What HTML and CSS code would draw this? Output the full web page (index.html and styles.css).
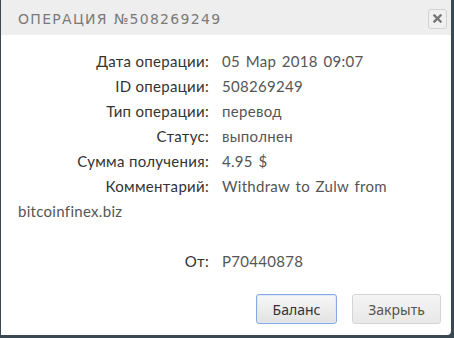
FILE: index.html
```html
<!DOCTYPE html>
<html>
<head>
  <meta charset="utf-8"/>
  <title>Операция</title>
  <link rel="stylesheet" href="styles.css">
</head>
<body>

  <!-- ---------- DIALOG ---------- -->
  <div class="dialog">
    <div class="dialog-header">
      <span class="dialog-title">Операция №508269249</span>
      <button type="button" class="btn-close" title="Закрыть">
        <svg width="9" height="9" viewBox="0 0 9 9">
          <path d="M1.5 1.5 L7.5 7.5 M7.5 1.5 L1.5 7.5" stroke="#777" stroke-width="2.4" stroke-linecap="square"/>
        </svg>
      </button>
    </div>

    <div class="dialog-body">
      <div class="row"><span class="label">Дата операции:</span><span class="value">05 Мар 2018 09:07</span></div>
      <div class="row"><span class="label">ID операции:</span><span class="value">508269249</span></div>
      <div class="row"><span class="label">Тип операции:</span><span class="value">перевод</span></div>
      <div class="row"><span class="label">Статус:</span><span class="value">выполнен</span></div>
      <div class="row"><span class="label">Сумма получения:</span><span class="value">4.95 $</span></div>
      <div class="row"><span class="label">Комментарий:</span><span class="value">Withdraw to Zulw from bitcoinfinex.biz</span></div>
      <div class="row empty"></div>
      <div class="row"><span class="label">От:</span><span class="value">P70440878</span></div>
    </div>

    <div class="dialog-footer">
      <button type="button" class="btn btn-focus">Баланс</button>
      <button type="button" class="btn btn-light">Закрыть</button>
    </div>
  </div>

</body>
</html>
```

FILE: styles.css
```css
/* Basic reset */
* {
  box-sizing: border-box;
  margin: 0;
  padding: 0;
}
body {
  background: #3a4851;
  width: 454px;
  height: 338px;
  overflow: hidden;
}

/* ---------- DIALOG ---------- */
.dialog {
  margin-left: 1px;
  width: 450px;
  height: 335px;
  background: #fff;
  border-radius: 0 0 4px 0;
  display: flex;
  flex-direction: column;
  overflow: hidden;
}
.dialog-header {
  height: 35px;
  background: #eeeeee;
  display: flex;
  align-items: center;
  justify-content: space-between;
  padding: 0 4px 0 17px;
}
.dialog-title {
  font-family: "DejaVu Sans", sans-serif;
  font-size: 14px;
  letter-spacing: 1.3px;
  text-transform: uppercase;
  color: #7a7a7a;
  margin-top: 2px;
}
.btn-close {
  width: 19px;
  height: 20px;
  border: 1px solid #d2d2d2;
  border-radius: 3px;
  background: #f0f0f0;
  display: flex;
  align-items: center;
  justify-content: center;
  margin-top: 2px;
}

/* ---------- BODY ---------- */
.dialog-body {
  flex: 1;
  padding: 14px 17px 0 17px;
  font-family: Lato, sans-serif;
  font-size: 15px;
  line-height: 25px;
  letter-spacing: 0.3px;
}
.row {
  min-height: 25px;
}
.label {
  display: inline-block;
  width: 191px;
  text-align: right;
  color: #333;
  margin-right: 13px;
}
.value {
  color: #555;
  word-spacing: 1.5px;
}

/* ---------- FOOTER ---------- */
.dialog-footer {
  display: flex;
  justify-content: flex-end;
  gap: 15px;
  padding: 0 10px 11px 0;
}
.btn {
  height: 30px;
  padding: 0 14px;
  font-family: "Noto Sans", sans-serif;
  font-size: 14px;
  border-radius: 3px;
  cursor: pointer;
}
.btn-focus {
  width: 81px;
  color: #333;
  background: linear-gradient(#f7f7f7, #e2e2e2);
  border: 1px solid #86a9e0;
  box-shadow: inset 0 0 0 1px #dde8f8;
}
.btn-light {
  width: 89px;
  color: #555;
  background: linear-gradient(#f4f4f4, #e8e8e8);
  border: 1px solid #d4d4d4;
}
```
